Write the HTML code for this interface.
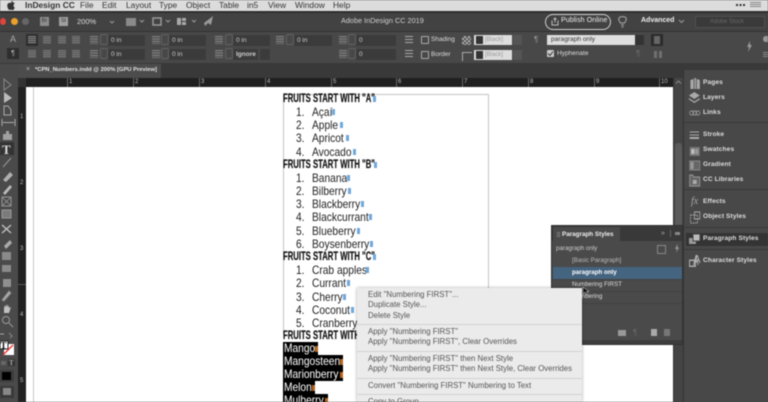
<!DOCTYPE html>
<html><head><meta charset="utf-8">
<style>
html,body{margin:0;padding:0;background:#484848}
#r{position:relative;width:768px;height:402px;overflow:hidden;background:#484848;font-family:"Liberation Sans",sans-serif;filter:blur(.45px)}
#r div{position:absolute;white-space:nowrap}
#r svg{position:absolute}
.m{top:0;font-size:8.4px;line-height:11px;color:#333}
.lt{color:#dcdcdc;font-size:6.5px;line-height:10px}
.fld{background:#3b3b3b;height:11px;border-radius:1px;color:#ccc;font-size:6.5px;line-height:11px;text-indent:3px}
.spin{width:6px;height:9px;border:1px solid #626262;border-radius:2px;background:#484848}
.al{width:8px;height:8px;background:repeating-linear-gradient(#757575 0 1px,#5a5a5a 1px 2px)}
.ic{width:8px;height:8px;background:repeating-linear-gradient(#808080 0 1px,#555 1px 2.5px)}
.h{left:283px;margin-top:1px;font-weight:bold;font-size:11.5px;line-height:13px;color:#111;transform:scaleX(.67);transform-origin:0 50%;-webkit-text-stroke:.2px #111}
.n{left:296px;margin-top:.5px;font-size:12px;line-height:13px;color:#222;transform:scaleX(.85);transform-origin:0 50%}
.t{left:312px;margin-top:.5px;font-size:12px;line-height:13px;color:#222;transform:scaleX(.85);transform-origin:0 50%}
.p{width:3px;height:6px;background:#6fa8dc}
.o{width:3px;height:6px;background:#b5651d}
.s{left:572px;color:#ddd;font-size:6.2px;line-height:10px}
.pn{left:703px;color:#ddd;font-size:6.6px;font-weight:bold;line-height:10px;letter-spacing:.1px}
.sep{left:684px;width:84px;height:1px;background:#383838}
.c{left:368px;color:#555;font-size:7.8px;line-height:10px}
.cs{left:357px;width:225px;height:1px;background:#d2d2d2}
.rn{top:79px;color:#bbb;font-size:6px;line-height:7px}
.rt{top:78px;width:1px;height:9px;background:#666}
.w{background:#000}
</style></head><body><div id="r">

<!-- menu bar -->
<div style="left:0;top:0;width:768px;height:12px;background:#dcdcdc"></div>
<svg style="left:7px;top:0" width="8" height="11"><path d="M4 3 C5 2 7 2 7.6 3.5 C6 4.5 6.3 7 7.8 7.6 C7 9.5 6 10.5 5 10 C4.3 9.7 3.7 9.7 3 10 C1.5 10.5 0 7 .3 5 C.6 2.8 2.8 2.4 4 3 Z M4 2.5 C4 1.5 5 .7 5.8 .6 C5.8 1.6 5 2.4 4 2.5 Z" fill="#333"/></svg>
<div class="m" style="left:25px;font-weight:bold">InDesign CC</div>
<div class="m" style="left:80px">File</div>
<div class="m" style="left:102px">Edit</div>
<div class="m" style="left:126px">Layout</div>
<div class="m" style="left:159px">Type</div>
<div class="m" style="left:186px">Object</div>
<div class="m" style="left:219px">Table</div>
<div class="m" style="left:247px">in5</div>
<div class="m" style="left:268px">View</div>
<div class="m" style="left:295px">Window</div>
<div class="m" style="left:333px">Help</div>
<div style="left:736px;top:4px;width:9px;height:2px;background:repeating-linear-gradient(90deg,#333 0 2px,transparent 2px 3.5px)"></div>
<div style="left:750px;top:2px;width:11px;height:1px;background:#888;box-shadow:0 2px 0 #888,0 4px 0 #888"></div>
<div style="left:0;top:11px;width:768px;height:2px;background:#2e2e2e"></div>

<!-- app bar -->
<div style="left:0;top:13px;width:768px;height:18px;background:#424242"></div>
<div style="left:0;top:18px;width:6px;height:7px;border-radius:50%;background:#e0443e"></div>
<div style="left:11px;top:18px;width:7px;height:7px;border-radius:50%;background:#e9a12c"></div>
<div style="left:22px;top:18px;width:7px;height:7px;border-radius:50%;background:#666"></div>
<div style="left:40px;top:17px;width:9px;height:9px;background:#8c8c8c;color:#333;font-size:5.5px;line-height:9px;text-align:center">Br</div>
<div style="left:59px;top:17px;width:9px;height:9px;background:#a0a0a0;color:#333;font-size:5.5px;line-height:9px;text-align:center">St</div>
<div style="left:77px;top:16px;color:#ddd;font-size:7.5px;line-height:11px">200%</div>
<svg style="left:108px;top:16px" width="110" height="11"><path d="M2 4 l2 2 l2-2" stroke="#999" fill="none" transform="translate(0,1)"/><rect x="18" y="2" width="10" height="8" fill="#8a8a8a"/><path d="M32 4 l2 2 l2-2 M58 4 l2 2 l2-2 M84 4 l2 2 l2-2" stroke="#999" fill="none"/><rect x="45" y="2" width="8" height="7" fill="none" stroke="#999" stroke-width="1.5"/><rect x="69" y="2" width="4" height="7" fill="#aaa"/><rect x="74" y="2" width="4" height="3" fill="#aaa"/><rect x="74" y="6" width="4" height="3" fill="#aaa"/><path d="M96 7 L105 0 L103 9 L100 7 L97 10 Z" fill="#999"/></svg>
<div style="left:341px;top:15px;color:#d0d0d0;font-size:7.3px;line-height:12px">Adobe InDesign CC 2019</div>
<div style="left:545px;top:14px;width:64px;height:14px;border:1px solid #d0d0d0;border-radius:8px"></div>
<svg style="left:551px;top:17px" width="8" height="9"><path d="M1 3.500 v4.500 h6 v-4.500 M4 5.500 v-4.500 M2.500 2.500 l1.500-1.500 l1.500 1.500" stroke="#bbb" fill="none"/></svg>
<div style="left:561px;top:15px;color:#eee;font-size:7px;line-height:12px;letter-spacing:.1px">Publish Online</div>
<svg style="left:618px;top:15px" width="9" height="13"><path d="M2.5 8 C1 6 .5 5 .8 3.5 C1.3 1 7.7 1 8.2 3.5 C8.5 5 8 6 6.5 8 Z M3 10 h3 M3.5 12 h2" stroke="#aaa" fill="none"/></svg>
<div style="left:641px;top:15px;color:#eee;font-size:7px;line-height:12px;font-weight:bold">Advanced</div>
<svg style="left:678px;top:19px" width="7" height="5"><path d="M1 1 l2.5 2.5 l2.5-2.5" stroke="#999" fill="none"/></svg>
<div style="left:695px;top:16px;width:68px;height:10px;background:#3a3a3a;border:1px solid #505050;color:#666;font-size:6px;line-height:10px;text-indent:14px">Adobe Stock</div>

<!-- control panel -->
<div style="left:0;top:31px;width:768px;height:32px;background:#484848;border-top:1px solid #333"></div>
<div style="left:10px;top:34px;color:#aaa;font-size:9px;line-height:11px">A</div>
<div style="left:7px;top:48px;width:12px;height:11px;background:#2e2e2e;color:#bbb;font-size:7px;line-height:11px;text-align:center">¶</div>
<div style="left:26px;top:34px;width:12px;height:12px;background:#2e2e2e"></div>
<div class="al" style="left:28px;top:36px;background:repeating-linear-gradient(#8a8a8a 0 1px,#3c3c3c 1px 2px)"></div>
<div class="al" style="left:43px;top:36px"></div>
<div class="al" style="left:58px;top:36px"></div>
<div class="al" style="left:72px;top:36px"></div>
<div class="al" style="left:28px;top:50px"></div>
<div class="al" style="left:43px;top:50px"></div>
<div class="al" style="left:58px;top:50px"></div>
<div class="al" style="left:72px;top:50px"></div>

<div class="ic" style="left:90px;top:36px"></div>
<div class="spin" style="left:100px;top:34px"></div><div class="fld" style="left:108px;top:35px;width:37px">0 in</div>
<div class="ic" style="left:90px;top:50px"></div>
<div class="spin" style="left:100px;top:48px"></div><div class="fld" style="left:108px;top:49px;width:37px">0 in</div>

<div class="ic" style="left:152px;top:36px"></div>
<div class="spin" style="left:161px;top:34px"></div><div class="fld" style="left:169px;top:35px;width:37px">0 in</div>
<div class="ic" style="left:152px;top:50px"></div>
<div class="spin" style="left:161px;top:48px"></div><div class="fld" style="left:169px;top:49px;width:37px">0 in</div>

<div class="ic" style="left:215px;top:36px"></div>
<div class="spin" style="left:225px;top:34px"></div><div class="fld" style="left:233px;top:35px;width:37px">0 in</div>
<div class="ic" style="left:215px;top:50px"></div>
<div class="spin" style="left:225px;top:48px"></div><div class="fld" style="left:233px;top:49px;width:25px;font-weight:bold">Ignore</div>
<div class="fld" style="left:260px;top:49px;width:10px"></div>

<div class="ic" style="left:276px;top:36px"></div>
<div class="spin" style="left:286px;top:34px"></div><div class="fld" style="left:294px;top:35px;width:38px">0 in</div>

<div class="ic" style="left:339px;top:36px"></div>
<div class="spin" style="left:348px;top:34px"></div><div class="fld" style="left:356px;top:35px;width:40px">0</div>
<div class="ic" style="left:339px;top:50px"></div>
<div class="spin" style="left:348px;top:48px"></div><div class="fld" style="left:356px;top:49px;width:40px">0</div>

<div class="ic" style="left:405px;top:36px;background:repeating-linear-gradient(#aaa 0 1px,#484848 1px 3px)"></div>
<div class="ic" style="left:405px;top:50px;background:repeating-linear-gradient(#aaa 0 1px,#484848 1px 3px)"></div>
<div style="left:421px;top:36px;width:6px;height:6px;border:1px solid #aaa;border-radius:1px"></div>
<div class="lt" style="left:431px;top:35px">Shading</div>
<div style="left:421px;top:51px;width:6px;height:6px;border:1px solid #aaa;border-radius:1px"></div>
<div class="lt" style="left:431px;top:50px">Border</div>
<div style="left:462px;top:36px;width:9px;height:9px;background:repeating-conic-gradient(#aaa 0 25%,#555 0 50%) 0 0/4px 4px"></div>
<div style="left:462px;top:52px;width:9px;height:8px;border-left:1px solid #aaa;border-top:1px solid #aaa"></div>
<div style="left:474px;top:35px;width:38px;height:10px;background:#ddd"></div>
<div style="left:476px;top:36px;width:7px;height:8px;background:#333"></div>
<div style="left:485px;top:35px;color:#999;font-size:6px;line-height:10px">[Black]</div>
<div style="left:513px;top:35px;width:9px;height:10px;background:#555"></div>
<div style="left:474px;top:50px;width:38px;height:10px;background:#ddd"></div>
<div style="left:476px;top:51px;width:7px;height:8px;background:#333"></div>
<div style="left:485px;top:50px;color:#999;font-size:6px;line-height:10px">[Black]</div>
<div style="left:513px;top:50px;width:9px;height:10px;background:#555"></div>
<div style="left:534px;top:35px;color:#999;font-size:8px;line-height:10px">¶</div>

<div style="left:547px;top:35px;width:88px;height:10px;background:#dedede;color:#333;font-size:6.6px;line-height:10px;text-indent:4px">paragraph only</div>
<div style="left:635px;top:35px;width:9px;height:10px;background:#333"></div>
<div style="left:651px;top:34px;width:12px;height:12px;background:#2b2b2b"></div>
<div style="left:654px;top:36px;width:6px;height:8px;background:#666"></div>
<div style="left:547px;top:50px;width:7px;height:7px;background:#ccc;border-radius:1px"></div>
<svg style="left:547px;top:50px" width="7" height="7"><path d="M1 3.500 l2 2 l3-4" stroke="#333" fill="none"/></svg>
<div class="lt" style="left:557px;top:49px">Hyphenate</div>
<div style="left:636px;top:49px;color:#6a6a6a;font-size:8px;line-height:10px">¶</div>
<div style="left:654px;top:51px;width:8px;height:7px;background:repeating-linear-gradient(90deg,#707070 0 3px,#484848 3px 5px)"></div>
<svg style="left:746px;top:41px" width="7" height="11"><path d="M4 0 L1 6 H3 L2 11 L6 4 H4 Z" fill="#999"/></svg>
<div style="left:763px;top:36px;width:5px;height:6px;background:#999;border-radius:50% 0 0 50%"></div>
<div style="left:763px;top:52px;width:5px;height:5px;background:repeating-linear-gradient(#888 0 1px,#484848 1px 2px)"></div>

<!-- tab bar -->
<div style="left:0;top:63px;width:768px;height:15px;background:#393939"></div>
<div style="left:18px;top:64px;width:143px;height:14px;background:#4c4c4c"></div>
<div style="left:26px;top:65px;color:#bbb;font-size:7px;line-height:10px">×</div>
<div style="left:35px;top:65px;color:#e4e4e4;font-size:5.8px;font-weight:bold;line-height:11px">*CPN_Numbers.indd @ 200% [GPU Preview]</div>

<!-- canvas -->
<div style="left:26px;top:87px;width:648px;height:315px;background:#fff"></div>
<div style="left:33px;top:87px;width:1px;height:315px;background:#c8c8c8"></div>
<div style="left:283px;top:94px;width:206px;height:240px;border:1px solid #c4c4c4;border-bottom:0;box-sizing:border-box"></div>

<!-- h ruler -->
<div style="left:18px;top:78px;width:656px;height:9px;background:#202020"></div>
<div style="left:18px;top:78px;width:8px;height:9px;background:#333"></div>
<div class="rt" style="left:67px"></div><div class="rn" style="left:69px">1</div>
<div class="rt" style="left:133px"></div><div class="rn" style="left:135px">2</div>
<div class="rt" style="left:199px"></div><div class="rn" style="left:201px">3</div>
<div class="rt" style="left:265px"></div><div class="rn" style="left:267px">4</div>
<div class="rt" style="left:331px"></div><div class="rn" style="left:333px">5</div>
<div class="rt" style="left:396px"></div><div class="rn" style="left:398px">6</div>
<div class="rt" style="left:462px"></div><div class="rn" style="left:464px">7</div>
<div class="rt" style="left:528px"></div><div class="rn" style="left:530px">8</div>
<div class="rt" style="left:594px"></div><div class="rn" style="left:596px">9</div>
<div class="rt" style="left:659px"></div><div class="rn" style="left:661px">10</div>

<!-- v ruler -->
<div style="left:18px;top:87px;width:8px;height:315px;background:#222"></div>
<div class="rn" style="left:20px;top:114px">1</div>
<div class="rn" style="left:20px;top:180px">2</div>
<div class="rn" style="left:20px;top:246px">3</div>
<div class="rn" style="left:20px;top:312px">4</div>
<div class="rn" style="left:20px;top:378px">5</div>
<div style="left:18px;top:284px;width:8px;height:1px;background:#555"></div>

<!-- toolbar -->
<div style="left:0;top:64px;width:18px;height:338px;background:#4a4a4a"></div>
<svg style="left:0;top:0" width="18" height="402">
<path d="M4 79 L11 85 L4 90 Z" fill="none" stroke="#888"/>
<path d="M4 92 L12 98 L4 103 Z" fill="#bbb"/>
<path d="M4 106 h4 l3 4 v5 h-7 z" fill="none" stroke="#aaa"/>
<path d="M2 119 v7 M15 119 v7 M3 122.500 h11" stroke="#aaa" fill="none"/>
<path d="M3 134 h3 v-3 h3 v3 h3 v6 h-9 z" fill="#a0a0a0"/>
<rect x="0" y="142" width="14" height="13" fill="#333"/>
<text x="2" y="154" font-family="Liberation Serif" font-weight="bold" font-size="13" fill="#ddd">T</text>
<path d="M3 167 L11 158" stroke="#999"/>
<path d="M3 180 L10 172 L13 175 L6 182 Z" fill="#b0b0b0"/>
<path d="M3 193 L10 185 L12 187 L5 195 Z" fill="#bbb"/>
<rect x="2" y="197" width="9" height="9" fill="none" stroke="#999"/><path d="M2 197 L11 206 M11 197 L2 206" stroke="#888"/>
<rect x="2" y="210" width="9" height="8" fill="#7a7a7a" stroke="#999"/>
<path d="M2 225 L11 233 M11 225 L2 233" stroke="#c0c0c0" stroke-width="1.4"/>
<path d="M4 246 L10 240 L12 243 L6 249 Z" fill="#aaa"/>
<rect x="2" y="252" width="9" height="8" fill="#8a8a8a"/>
<rect x="2" y="265" width="9" height="7" fill="#8a8a8a"/>
<rect x="3" y="279" width="8" height="8" fill="#909090"/>
<path d="M2 300 L9 291 L11 293 L4 301 Z" fill="#b0b0b0" stroke="#888"/>
<path d="M4 313 v-5 l1-3 l1 2 l1-3 l1 3 l1-2 v3 l2-1 l-2 6 z" fill="#c0c0c0"/>
<circle cx="6" cy="320" r="3.500" fill="none" stroke="#999"/><path d="M9 323 L13 327" stroke="#999"/>
<path d="M0 334 h4" stroke="#aaa"/><path d="M9 333 l3 3 l-2 2" stroke="#888" fill="none"/>
<rect x="4" y="344" width="10" height="11" fill="#fff"/>
<rect x="0" y="341" width="8" height="8" fill="#fff" stroke="#222"/>
<text x=".5" y="348.500" font-family="Liberation Serif" font-weight="bold" font-size="9" fill="#111">T</text>
<path d="M3 355 L13 345" stroke="#e33" stroke-width="1.300"/>
<rect x="1" y="361" width="5" height="4" fill="#666"/>
<rect x="8" y="359" width="7" height="7" fill="#333"/><text x="9" y="365" font-size="7" font-weight="bold" font-family="Liberation Serif" fill="#aaa">T</text>
<rect x="0" y="370" width="14" height="12" fill="#3d3d3d"/><rect x="2" y="372" width="9" height="8" fill="#000"/>
<rect x="0" y="386" width="14" height="12" fill="#3a3a3a"/><rect x="3" y="388" width="8" height="7" fill="#888"/>
</svg>

<!-- document text -->
<div class="h" style="top:92px">FRUITS START WITH "A"</div><div class="p" style="left:373px;top:96px"></div>
<div class="n" style="top:105px">1.</div><div class="t" style="top:105px">Açaí</div><div class="p" style="left:332px;top:109px"></div>
<div class="n" style="top:118px">2.</div><div class="t" style="top:118px">Apple</div><div class="p" style="left:340px;top:122px"></div>
<div class="n" style="top:131px">3.</div><div class="t" style="top:131px">Apricot</div><div class="p" style="left:346px;top:135px"></div>
<div class="n" style="top:145px">4.</div><div class="t" style="top:145px">Avocado</div><div class="p" style="left:353px;top:149px"></div>
<div class="h" style="top:158px">FRUITS START WITH "B"</div><div class="p" style="left:374px;top:162px"></div>
<div class="n" style="top:171px">1.</div><div class="t" style="top:171px">Banana</div><div class="p" style="left:347px;top:175px"></div>
<div class="n" style="top:184px">2.</div><div class="t" style="top:184px">Bilberry</div><div class="p" style="left:348px;top:188px"></div>
<div class="n" style="top:197px">3.</div><div class="t" style="top:197px">Blackberry</div><div class="p" style="left:361px;top:201px"></div>
<div class="n" style="top:210px">4.</div><div class="t" style="top:210px">Blackcurrant</div><div class="p" style="left:369px;top:214px"></div>
<div class="n" style="top:224px">5.</div><div class="t" style="top:224px">Blueberry</div><div class="p" style="left:357px;top:228px"></div>
<div class="n" style="top:237px">6.</div><div class="t" style="top:237px">Boysenberry</div><div class="p" style="left:370px;top:241px"></div>
<div class="h" style="top:250px">FRUITS START WITH "C"</div><div class="p" style="left:373px;top:254px"></div>
<div class="n" style="top:263px">1.</div><div class="t" style="top:263px">Crab apples</div><div class="p" style="left:366px;top:267px"></div>
<div class="n" style="top:276px">2.</div><div class="t" style="top:276px">Currant</div><div class="p" style="left:347px;top:280px"></div>
<div class="n" style="top:290px">3.</div><div class="t" style="top:290px">Cherry</div><div class="p" style="left:343px;top:294px"></div>
<div class="n" style="top:303px">4.</div><div class="t" style="top:303px">Coconut</div><div class="p" style="left:351px;top:307px"></div>
<div class="n" style="top:316px">5.</div><div class="t" style="top:316px">Cranberry</div>
<div class="h" style="top:329px">FRUITS START WITH</div>
<div class="w" style="left:283px;top:342px;width:35px;height:13px"></div>
<div class="w" style="left:283px;top:355px;width:60px;height:13px"></div>
<div class="w" style="left:283px;top:368px;width:60px;height:13px"></div>
<div class="w" style="left:283px;top:381px;width:32px;height:13px"></div>
<div class="w" style="left:283px;top:394px;width:45px;height:8px"></div>
<div class="t" style="left:284px;top:341px;color:#fff">Mango</div><div class="o" style="left:315px;top:346px"></div>
<div class="t" style="left:284px;top:354px;color:#fff">Mangosteen</div><div class="o" style="left:340px;top:359px"></div>
<div class="t" style="left:284px;top:367px;color:#fff">Marionberry</div><div class="o" style="left:340px;top:372px"></div>
<div class="t" style="left:284px;top:380px;color:#fff">Melon</div><div class="o" style="left:312px;top:385px"></div>
<div class="t" style="left:284px;top:393px;color:#fff">Mulberry</div><div class="o" style="left:325px;top:398px"></div>

<!-- scrollbar -->
<div style="left:674px;top:78px;width:9px;height:324px;background:#444"></div>
<div style="left:675px;top:143px;width:7px;height:85px;background:#5a5a5a;border-radius:3px"></div>
<div style="left:673px;top:78px;width:1px;height:324px;background:#333"></div>
<svg style="left:675px;top:80px" width="7" height="5"><path d="M1 3.500 l2.500-2.500 l2.500 2.500" stroke="#888" fill="none"/></svg>

<!-- right dock -->
<div style="left:683px;top:70px;width:85px;height:332px;background:#484848;border-left:1px solid #333"></div>
<svg style="left:683px;top:70px" width="85" height="210"><g transform="translate(2,0) scale(.78,1)">
<g fill="#a9a9a9"><path d="M7 10 l4-1 v10 h-4 z M12 8 h2 v11 h-2 z M15 9 l4 1 v9 h-4 z"/>
<path d="M12 22 l7 3.500 l-7 3.500 l-7-3.500 z M5 28 l7 3.500 l7-3.500 v1.500 l-7 3.500 l-7-3.500 z"/></g>
<g fill="none" stroke="#9a9a9a"><rect x="6" y="41" width="5" height="4" rx="2"/><rect x="10" y="41" width="5" height="4" rx="2"/><rect x="14" y="41" width="5" height="4" rx="2"/></g>
<path d="M6 62 h12 M6 65 h12" stroke="#aaa"/><rect x="6" y="67" width="12" height="2" fill="#aaa"/>
<rect x="6" y="77" width="13" height="9" fill="#777"/><rect x="8" y="79" width="4" height="5" fill="#c0c0c0"/><rect x="13" y="79" width="4" height="5" fill="#999"/>
<rect x="6" y="91" width="13" height="9" fill="#666" stroke="#888"/><rect x="7" y="92" width="4" height="7" fill="#999"/>
<path d="M6 105 h4 l1 2 h8 v9 h-13 z" fill="#666" stroke="#999"/><rect x="10" y="110" width="5" height="4" fill="#aaa"/>
<rect x="7" y="145" width="9" height="8" fill="none" stroke="#aaa" stroke-dasharray="2 1"/><rect x="12" y="142" width="7" height="7" fill="none" stroke="#aaa"/>
<rect x="6" y="168" width="7" height="6" fill="#999"/><rect x="10" y="164" width="8" height="7" fill="#bbb" stroke="#444"/>
<path d="M6 190 h6 v6 h-6 z" fill="none" stroke="#aaa"/><path d="M11 195 L14 186 L17 195 M12 192 h4" fill="none" stroke="#bbb"/>
</g></svg>
<div class="pn" style="top:78px">Pages</div>
<div class="pn" style="top:93px">Layers</div>
<div class="pn" style="top:108px">Links</div>
<div class="sep" style="top:122px"></div>
<div class="pn" style="top:130px">Stroke</div>
<div class="pn" style="top:145px">Swatches</div>
<div class="pn" style="top:160px">Gradient</div>
<div class="pn" style="top:175px">CC Libraries</div>
<div class="sep" style="top:189px"></div>
<div style="left:691px;top:196px;font-family:'Liberation Serif';font-style:italic;font-size:10px;line-height:12px;color:#aaa">fx</div><div class="pn" style="top:197px">Effects</div>
<div class="pn" style="top:212px">Object Styles</div>
<div class="sep" style="top:227px"></div>
<div style="left:686px;top:233px;width:82px;height:13px;background:#343434"></div>
<svg style="left:689px;top:233px" width="12" height="12"><rect x="0" y="5" width="7" height="6" fill="#999"/><rect x="4" y="1" width="7" height="7" fill="#bbb" stroke="#444"/></svg>
<div class="pn" style="top:234px">Paragraph Styles</div>
<div class="sep" style="top:249px"></div>
<svg style="left:689px;top:255px" width="12" height="12"><rect x=".5" y="5.500" width="6" height="6" fill="none" stroke="#aaa"/><path d="M5 8 L8 0 L11 8 M6 5.500 h4" fill="none" stroke="#bbb"/></svg>
<div class="pn" style="top:256px">Character Styles</div>

<!-- paragraph styles panel -->
<div style="left:552px;top:226px;width:130px;height:118px;background:#4a4a4a;box-shadow:0 0 0 1px #333"></div>
<div style="left:552px;top:226px;width:130px;height:15px;background:#393939"></div>
<div style="left:553px;top:227px;width:67px;height:14px;background:#4a4a4a"></div>
<div style="left:557px;top:232px;width:1px;height:3px;border:1px solid #777"></div>
<div style="left:562px;top:229px;color:#eee;font-weight:bold;font-size:6.3px;line-height:11px">Paragraph Styles</div>
<div style="left:661px;top:229px;color:#aaa;font-size:7px;line-height:9px">»</div>
<div style="left:670px;top:230px;width:1px;height:7px;background:#666"></div>
<div style="left:675px;top:232px;width:5px;height:3px;background:#888"></div>
<div class="s" style="left:556px;top:244px;color:#ccc">paragraph only</div>
<div style="left:657px;top:245px;width:7px;height:7px;border:1px solid #888"></div>
<svg style="left:674px;top:244px" width="6" height="9"><path d="M3.500 0 L1 5 H3 L2 9 L5 3.500 H3.500 Z" fill="#999"/></svg>
<div class="s" style="top:256px;color:#bbb">[Basic Paragraph]</div>
<div style="left:553px;top:267px;width:129px;height:12px;background:#456480"></div>
<div class="s" style="top:268px;color:#fff;font-weight:bold">paragraph only</div>
<div class="s" style="top:280px">Numbering FIRST</div>
<div class="s" style="top:292px">Numbering</div>
<div style="left:553px;top:279px;width:129px;height:1px;background:#424242"></div>
<div style="left:553px;top:291px;width:129px;height:1px;background:#424242"></div>
<div style="left:553px;top:303px;width:129px;height:1px;background:#424242"></div>
<div style="left:618px;top:330px;width:8px;height:6px;background:#999"></div>
<div style="left:633px;top:328px;color:#6a6a6a;font-size:8px;line-height:10px">¶</div>
<div style="left:651px;top:329px;width:6px;height:7px;background:#aaa"></div>
<div style="left:664px;top:329px;width:6px;height:7px;background:#777"></div>
<div style="left:552px;top:340px;width:130px;height:4px;background:#3d3d3d"></div>

<!-- context menu -->
<div style="left:357px;top:288px;width:225px;height:114px;background:#ebebeb;box-shadow:0 0 3px rgba(0,0,0,.35)"></div>
<div class="c" style="top:290px">Edit "Numbering FIRST"...</div>
<div class="c" style="top:300px">Duplicate Style...</div>
<div class="c" style="top:311px">Delete Style</div>
<div class="cs" style="top:324px"></div>
<div class="c" style="top:327px">Apply "Numbering FIRST"</div>
<div class="c" style="top:337px">Apply "Numbering FIRST", Clear Overrides</div>
<div class="cs" style="top:351px"></div>
<div class="c" style="top:354px">Apply "Numbering FIRST" then Next Style</div>
<div class="c" style="top:364px">Apply "Numbering FIRST" then Next Style, Clear Overrides</div>
<div class="cs" style="top:378px"></div>
<div class="c" style="top:381px">Convert "Numbering FIRST" Numbering to Text</div>
<div class="cs" style="top:394px"></div>
<div class="c" style="top:397px">Copy to Group...</div>

<svg style="left:582px;top:286px" width="8" height="11"><path d="M1 1 L1 8 L3 6 L5 9 L6 8 L4.500 5.500 L7 5.500 Z" fill="#111" stroke="#ddd" stroke-width=".5"/></svg>
</div></body></html>
